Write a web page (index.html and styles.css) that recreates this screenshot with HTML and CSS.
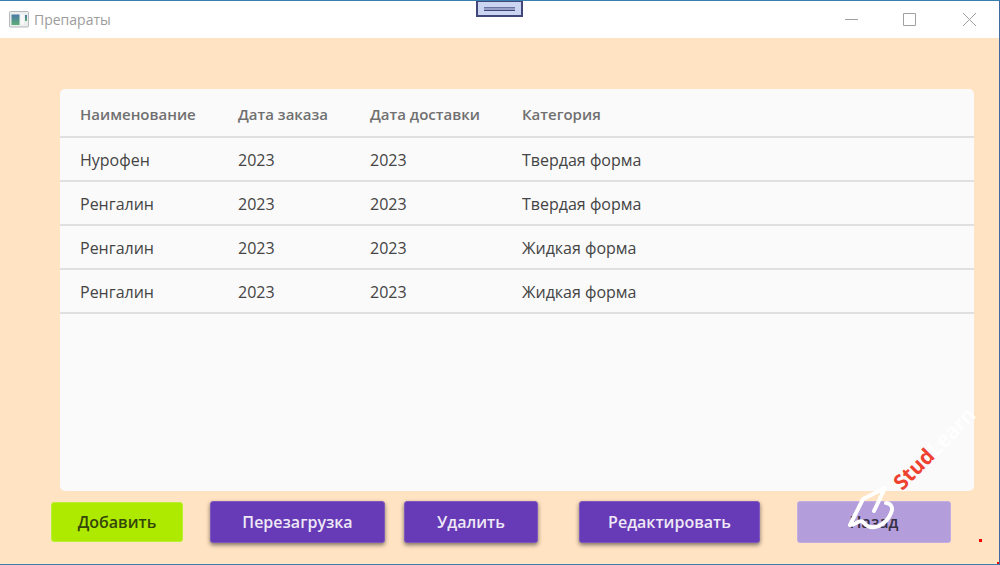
FILE: index.html
```
<!DOCTYPE html>
<html lang="ru">
<head>
    <meta charset="UTF-8">
    <meta name="viewport" content="width=device-width, initial-scale=1.0">
    <title>Препараты</title>
    <link rel="stylesheet" href="styles.css">
</head>
<body>
    <div class="window">
        <header class="titlebar">
            <svg class="app-icon" width="20" height="17" viewBox="0 0 20 17">
                <defs>
                    <linearGradient id="screen" x1="0" y1="0" x2="0" y2="1">
                        <stop offset="0" stop-color="#4a78a8"/>
                        <stop offset="1" stop-color="#5cae74"/>
                    </linearGradient>
                </defs>
                <rect x="0.5" y="0.5" width="19" height="15.5" rx="1" fill="#eceeee" stroke="#b4b8ba"/>
                <rect x="2.5" y="3.5" width="8" height="10.5" fill="url(#screen)"/>
                <rect x="11.5" y="3.5" width="3.5" height="10" fill="#f8f8f8"/>
                <rect x="16" y="4" width="2" height="6" fill="url(#screen)"/>
            </svg>
            <h1 class="title">Препараты</h1>
            <div class="window-controls">
                <button class="control" aria-label="Свернуть">
                    <svg width="14" height="14" viewBox="0 0 14 14"><path d="M1 6.5h13"/></svg>
                </button>
                <button class="control" aria-label="Развернуть">
                    <svg width="14" height="14" viewBox="0 0 14 14"><path d="M0.5 0.5h12v12h-12z"/></svg>
                </button>
                <button class="control" aria-label="Закрыть">
                    <svg width="14" height="14" viewBox="0 0 14 14"><path d="M1 0l13 13M14 0L1 13"/></svg>
                </button>
            </div>
            <button class="debug-bar" aria-label="Панель отладки"><span class="debug-grip"></span></button>
        </header>

        <main class="content">
            <section class="card">
                <table class="grid">
                    <thead>
                        <tr>
                            <th class="col-name">Наименование</th>
                            <th class="col-order">Дата заказа</th>
                            <th class="col-delivery">Дата доставки</th>
                            <th>Категория</th>
                        </tr>
                    </thead>
                    <tbody>
                        <tr>
                            <td>Нурофен</td>
                            <td>2023</td>
                            <td>2023</td>
                            <td>Твердая форма</td>
                        </tr>
                        <tr>
                            <td>Ренгалин</td>
                            <td>2023</td>
                            <td>2023</td>
                            <td>Твердая форма</td>
                        </tr>
                        <tr>
                            <td>Ренгалин</td>
                            <td>2023</td>
                            <td>2023</td>
                            <td>Жидкая форма</td>
                        </tr>
                        <tr>
                            <td>Ренгалин</td>
                            <td>2023</td>
                            <td>2023</td>
                            <td>Жидкая форма</td>
                        </tr>
                    </tbody>
                </table>
            </section>

            <div class="actions">
                <button class="btn btn-add">Добавить</button>
                <button class="btn btn-primary btn-reload">Перезагрузка</button>
                <button class="btn btn-primary btn-delete">Удалить</button>
                <button class="btn btn-primary btn-edit">Редактировать</button>
                <button class="btn btn-back">Назад</button>
            </div>
        </main>

        <div class="watermark">
            <svg class="pen" width="50" height="50" viewBox="0 0 50 50">
                <path d="M40 5L18 16L5 42C11 42 14 36 18 39C28 51 42 40 46 30C49 24 45 20 41 20M40 5L29 28"/>
            </svg>
            <div class="brand"><span class="brand-red">Stud</span>Learn</div>
        </div>
        <span class="dot dot-inner"></span>
        <span class="dot dot-corner"></span>
    </div>
</body>
</html>
```
FILE: styles.css
```
* {
    box-sizing: border-box;
}

body {
    margin: 0;
    font-family: "Open Sans", "Noto Sans", sans-serif;
    font-size: 16px;
    color: #444;
}

.window {
    position: relative;
    display: flex;
    flex-direction: column;
    min-height: 100vh;
    overflow: hidden;
    background-color: #ffe3c3;
    border: 1px solid #3f6b9f;
    border-top-color: #3b7fae;
    border-bottom-color: #3b7fae;
    border-left: none;
}

/* title bar */
.titlebar {
    display: flex;
    align-items: center;
    height: 37px;
    padding-left: 9px;
    background-color: #fff;
}

.title {
    margin: 0 0 0 5px;
    font-size: 14px;
    font-weight: 400;
    color: #9c9c9c;
}

.window-controls {
    display: flex;
    margin-left: auto;
    padding-right: 1px;
}

.control {
    width: 59px;
    height: 37px;
    padding: 0;
    border: none;
    background: none;
}

.control svg {
    display: block;
    margin: 0 auto;
    fill: none;
    stroke: #a0a0a0;
}

.debug-bar {
    position: absolute;
    top: 0;
    left: 476px;
    width: 47px;
    height: 16px;
    padding: 0;
    border: 2px solid #42477a;
    border-top-width: 1px;
    background-color: #cbd5f1;
}

.debug-grip {
    display: block;
    width: 31px;
    height: 4px;
    margin: 0 auto;
    border-top: 1px solid #6c74a4;
    border-bottom: 1px solid #42477a;
    background-color: #98a0c8;
}

/* table card */
.content {
    display: flex;
    flex: 1;
    flex-direction: column;
    padding: 51px 25px 21px 51px;
}

.card {
    flex: 1;
    margin-left: 9px;
    border-radius: 5px;
    background-color: #fafafa;
}

.grid {
    width: 100%;
    border-collapse: collapse;
    text-align: left;
}

.grid th,
.grid td {
    height: 44px;
    padding: 2px 0 0 20px;
    border-bottom: 2px solid #e0e0e0;
    line-height: 22px;
    white-space: nowrap;
}

.grid th {
    height: 48px;
    font-size: 15px;
    font-weight: 600;
    color: #707070;
}

.grid .col-name {
    width: 158px;
}

.grid .col-order {
    width: 132px;
}

.grid .col-delivery {
    width: 152px;
}

/* buttons */
.actions {
    display: flex;
    align-items: center;
    margin-top: 10px;
}

.btn {
    height: 42px;
    padding: 0;
    border: 1px solid transparent;
    border-radius: 3px;
    font-family: inherit;
    font-size: 16px;
    font-weight: 600;
    cursor: pointer;
}

.btn-add {
    width: 132px;
    height: 40px;
    margin-right: 27px;
    border-color: #b9ee33;
    background-color: #aeea00;
    color: #34460a;
}

.btn-primary {
    border-color: #7f57bd;
    background-color: #673ab7;
    color: #eee8f6;
    box-shadow: 0 2px 4px rgba(0, 0, 0, 0.5);
}

.btn-reload {
    width: 175px;
    margin-right: 19px;
}

.btn-delete {
    width: 134px;
    margin-right: 41px;
}

.btn-edit {
    width: 181px;
    margin-right: 37px;
}

.btn-back {
    width: 154px;
    border-color: #bfaee0;
    background-color: #b39ddb;
    color: #362f42;
}

/* watermark over the window */
.watermark {
    position: absolute;
    right: 0;
    bottom: 0;
    width: 160px;
    height: 160px;
    pointer-events: none;
}

.pen {
    position: absolute;
    left: 6px;
    bottom: 31px;
    fill: none;
    stroke: #fff;
    stroke-width: 4;
    stroke-linejoin: round;
    stroke-linecap: round;
}

.brand {
    position: absolute;
    left: 66px;
    bottom: 70px;
    font-size: 21px;
    font-weight: 600;
    line-height: 24px;
    color: #fff;
    transform: rotate(-45deg);
    transform-origin: left bottom;
}

.brand-red {
    font-weight: 700;
    color: #ef4130;
}

.dot {
    position: absolute;
    width: 3px;
    height: 3px;
    background-color: #f00;
}

.dot-inner {
    right: 17px;
    bottom: 22px;
}

.dot-corner {
    right: -1px;
    bottom: -1px;
}
```
